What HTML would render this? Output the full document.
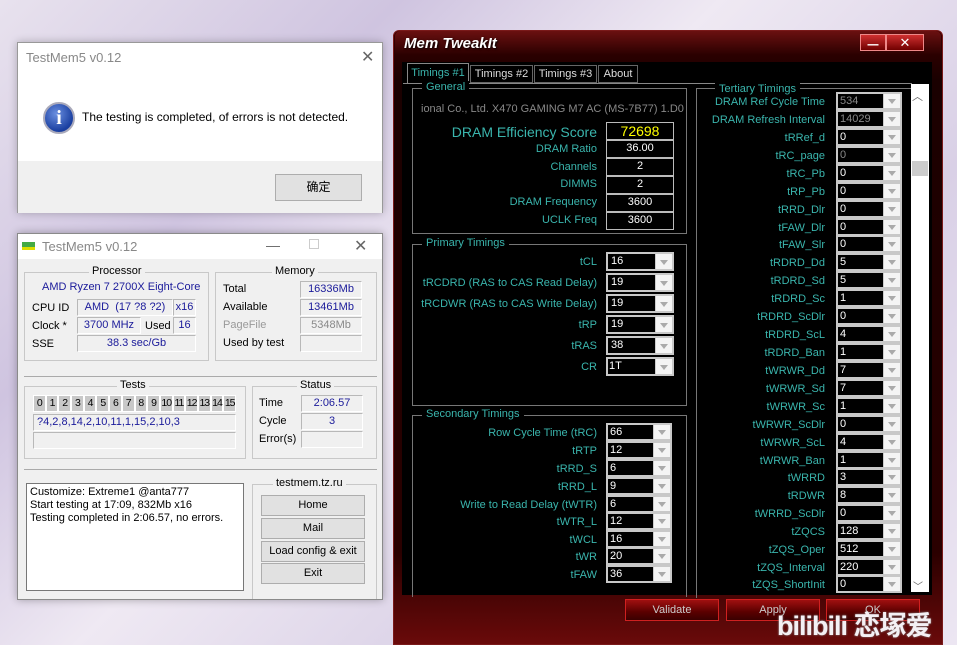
<!DOCTYPE html>
<html><head><meta charset="utf-8"><style>
*{margin:0;padding:0;box-sizing:border-box}
body{width:957px;height:645px;overflow:hidden;position:relative;font-family:"Liberation Sans","Noto Sans CJK SC",sans-serif;font-size:11px;
background:linear-gradient(135deg,#e8e2ee 0%,#cfc4e0 25%,#efe9f3 45%,#d9d0e6 70%,#ece6f2 100%)}
.a{position:absolute}
.w{background:#f0f0f0;border:1px solid #8a8a8a;box-shadow:0 0 8px rgba(0,0,0,.3)}
.g{border:1px solid #c8c8c8;position:absolute}
.gl{position:absolute;top:-8px;background:#f0f0f0;padding:0 3px;font-size:11px;color:#000}
.f{position:absolute;border:1px solid #b8b8b8;border-right-color:#fff;border-bottom-color:#fff;background:#f0f0f0;color:#1a1a9a;text-align:center;font-size:11px;line-height:15px;height:17px;white-space:nowrap}
.l{position:absolute;font-size:11px;color:#000;white-space:nowrap}
.btn{position:absolute;width:104px;height:21px;background:#e1e1e1;border:1px solid #adadad;text-align:center;line-height:19px;font-size:11px}
.mt{background:#000}
.t{position:absolute;color:#3ab5ad;font-size:11px;text-align:right;white-space:nowrap}
.v{position:absolute;border:1px solid #bbb;color:#fff;text-align:center;font-size:11px;line-height:15px;height:18px;background:#000}
.c{position:absolute;width:68px;height:19px;background:#000;border:2px solid #c8c8c8;color:#fff;font-size:11px;line-height:15px;padding-left:3px}
.c::after{content:"";position:absolute;right:0;top:0;width:16px;height:100%;background:#f4f4f4;border-left:1px solid #ccc}
.c::before{content:"";position:absolute;right:4px;top:6px;border:4px solid transparent;border-top:5px solid #aaa;z-index:2}
.c2{position:absolute;width:66px;height:18px;background:#000;border:2px solid #c8c8c8;color:#fff;font-size:11px;line-height:14px;padding-left:2px}
.c2::after{content:"";position:absolute;right:0;top:0;width:16px;height:100%;background:#f4f4f4;border-left:1px solid #ccc}
.c2::before{content:"";position:absolute;right:4px;top:5px;border:4px solid transparent;border-top:5px solid #aaa;z-index:2}
.gr{color:#888}
.mg{position:absolute;border:1px solid #777}
.mgl{position:absolute;top:-8px;background:#000;padding:0 4px;color:#3ab5ad;font-size:11px}
.rb{position:absolute;top:599px;width:94px;height:22px;border:1px solid #d02020;background:linear-gradient(#a01010,#5a0000 60%,#3a0000);color:#ccc;text-align:center;line-height:20px;font-size:11px}
.tab{position:absolute;top:65px;height:18px;border:1px solid #666;color:#ddd;text-align:center;line-height:16px;font-size:11px}
.tb span{background:#c8c8c8;border:1px solid #fff;width:12.7px;text-align:center;letter-spacing:-1px;font-size:10.5px}
</style></head><body>

<!-- dialog -->
<div class="a" style="left:17px;top:42px;width:366px;height:171px;background:#fff;border:1px solid #999;box-shadow:0 0 8px rgba(0,0,0,.25)">
 <div class="a" style="left:8px;top:7px;font-size:13px;color:#888">TestMem5 v0.12</div>
 <div class="a" style="left:343px;top:4px;font-size:16px;color:#666">✕</div>
 <div class="a" style="left:25px;top:59px;width:32px;height:32px;border-radius:50%;background:radial-gradient(circle at 40% 35%,#6a8fe0,#1a3fa0 70%);border:2px solid #aab;color:#fff;text-align:center;font:bold 20px/28px 'Liberation Serif',serif">i</div>
 <div class="a" style="left:64px;top:67px;font-size:12px;color:#000">The testing is completed, of errors is not detected.</div>
 <div class="a" style="left:0;top:118px;width:364px;height:52px;background:#f0f0f0"></div>
 <div class="a" style="left:257px;top:131px;width:87px;height:27px;background:#e1e1e1;border:1px solid #adadad;text-align:center;line-height:25px;font-size:12px">确定</div>
</div>

<!-- main testmem -->
<div class="a w" style="left:17px;top:233px;width:366px;height:367px">
 <div class="a" style="left:0;top:0;width:364px;height:25px;background:#fff"></div>
 <div class="a" style="left:4px;top:8px;width:13px;height:8px;background:#4a4;border-bottom:3px solid #dd0"></div>
 <div class="a" style="left:24px;top:5px;font-size:13px;color:#888">TestMem5 v0.12</div>
 <div class="a" style="left:248px;top:3px;color:#666;font-size:14px">—</div>
 <div class="a" style="left:291px;top:5px;width:10px;height:10px;border:1px solid #ccc"></div>
 <div class="a" style="left:336px;top:2px;color:#666;font-size:16px">✕</div>

 <div class="g" style="left:6px;top:38px;width:185px;height:89px"><div class="gl" style="left:64px">Processor</div>
  <div class="a" style="left:17px;top:8px;color:#1a1a9a;white-space:nowrap">AMD Ryzen 7 2700X Eight-Core</div>
  <div class="l" style="left:7px;top:29px">CPU ID</div><div class="f" style="left:52px;top:26px;width:96px">AMD &nbsp;(17 ?8 ?2)</div><div class="f" style="left:148px;top:26px;width:23px">x16</div>
  <div class="l" style="left:7px;top:47px">Clock *</div><div class="f" style="left:52px;top:44px;width:64px">3700 MHz</div><div class="l" style="left:120px;top:47px">Used</div><div class="f" style="left:148px;top:44px;width:23px">16</div>
  <div class="l" style="left:7px;top:65px">SSE</div><div class="f" style="left:52px;top:62px;width:119px">38.3 sec/Gb</div>
 </div>
 <div class="g" style="left:197px;top:38px;width:162px;height:89px"><div class="gl" style="left:56px">Memory</div>
  <div class="l" style="left:7px;top:10px">Total</div><div class="f" style="left:84px;top:8px;width:62px">16336Mb</div>
  <div class="l" style="left:7px;top:28px">Available</div><div class="f" style="left:84px;top:26px;width:62px">13461Mb</div>
  <div class="l" style="left:7px;top:46px;color:#999">PageFile</div><div class="f" style="left:84px;top:44px;width:62px;color:#888">5348Mb</div>
  <div class="l" style="left:7px;top:64px">Used by test</div><div class="f" style="left:84px;top:62px;width:62px"></div>
 </div>
 <div class="a" style="left:6px;top:142px;width:353px;border-top:1px solid #aaa"></div>
 <div class="g" style="left:6px;top:152px;width:222px;height:73px"><div class="gl" style="left:92px">Tests</div>
  <div class="a tb" style="left:8px;top:8px;width:203px;height:17px;display:flex;line-height:15px">
   <span>0</span><span>1</span><span>2</span><span>3</span><span>4</span><span>5</span><span>6</span><span>7</span><span>8</span><span>9</span><span>10</span><span>11</span><span>12</span><span>13</span><span>14</span><span>15</span>
  </div>
  <div class="f" style="left:8px;top:27px;width:203px;text-align:left;padding-left:3px;color:#1a1a9a">?4,2,8,14,2,10,11,1,15,2,10,3</div>
  <div class="f" style="left:8px;top:45px;width:203px"></div>
 </div>
 <div class="g" style="left:234px;top:152px;width:125px;height:73px"><div class="gl" style="left:44px">Status</div>
  <div class="l" style="left:6px;top:10px">Time</div><div class="f" style="left:48px;top:8px;width:62px">2:06.57</div>
  <div class="l" style="left:6px;top:28px">Cycle</div><div class="f" style="left:48px;top:26px;width:62px">3</div>
  <div class="l" style="left:6px;top:46px">Error(s)</div><div class="f" style="left:48px;top:44px;width:62px"></div>
 </div>
 <div class="a" style="left:6px;top:235px;width:353px;border-top:1px solid #aaa"></div>
 <div class="a" style="left:8px;top:249px;width:218px;height:108px;background:#fff;border:1px solid #777;padding:2px 3px;font-size:11px;line-height:13px;color:#000;white-space:nowrap">Customize: Extreme1 @anta777<br>Start testing at 17:09, 832Mb x16<br>Testing completed in 2:06.57, no errors.</div>
 <div class="g" style="left:234px;top:250px;width:125px;height:115px;border-bottom:none"><div class="gl" style="left:20px">testmem.tz.ru</div></div>
 <div class="btn" style="left:243px;top:261px">Home</div>
 <div class="btn" style="left:243px;top:284px">Mail</div>
 <div class="btn" style="left:243px;top:307px">Load config &amp; exit</div>
 <div class="btn" style="left:243px;top:329px">Exit</div>
</div>

<!-- Mem TweakIt -->
<div class="a" style="left:393px;top:30px;width:550px;height:615px;background:linear-gradient(#3a0000,#1a0000 8%,#2a0000 85%,#6a0a0a);border:1px solid #7a1a1a;border-radius:6px 6px 0 0"></div>
<div class="a" style="left:395px;top:31px;width:546px;height:24px;background:linear-gradient(#6a1010,#2a0000);border-radius:5px 5px 0 0"></div>
<div class="a" style="left:404px;top:35px;color:#fff;font:italic bold 15px 'Liberation Sans',sans-serif;text-shadow:1px 1px 2px #000">Mem TweakIt</div>
<div class="a" style="left:860px;top:34px;width:26px;height:17px;background:linear-gradient(#d03030,#700000);border:1px solid #e88;color:#fff;text-align:center;font-size:11px;line-height:12px">▁</div>
<div class="a" style="left:886px;top:34px;width:38px;height:17px;background:linear-gradient(#d03030,#700000);border:1px solid #e88;color:#fff;text-align:center;font-size:13px;line-height:15px">✕</div>
<div class="a mt" style="left:402px;top:62px;width:530px;height:533px"></div>
<!-- tabs -->
<div class="a" style="left:407px;top:63px;width:62px;height:21px;border:1px solid #888;border-bottom:none;background:#000;color:#3ab5ad;text-align:center;line-height:19px;font-size:11px">Timings #1</div>
<div class="tab" style="left:470px;width:63px">Timings #2</div>
<div class="tab" style="left:534px;width:63px">Timings #3</div>
<div class="tab" style="left:598px;width:40px">About</div>
<div class="a" style="left:403px;top:83px;width:509px;border-top:1px solid #888"></div>

<div class="mg" style="left:412px;top:88px;width:275px;height:146px"><div class="mgl" style="left:9px">General</div></div>
<div class="a" style="left:421px;top:103px;color:#888;font-size:11px;white-space:nowrap;width:264px;overflow:hidden">ional Co., Ltd. X470 GAMING M7 AC (MS-7B77) 1.D0</div>
<div class="t" style="left:300px;top:124px;width:297px;font-size:14px">DRAM Efficiency Score</div>
<div class="v" style="left:606px;top:122px;width:68px;color:#ff0;font-size:14px;line-height:16px">72698</div>
<div class="t" style="left:300px;top:143px;width:297px">DRAM Ratio</div><div class="v" style="left:606px;top:140px;width:68px">36.00</div>
<div class="t" style="left:300px;top:161px;width:297px">Channels</div><div class="v" style="left:606px;top:158px;width:68px">2</div>
<div class="t" style="left:300px;top:178px;width:297px">DIMMS</div><div class="v" style="left:606px;top:176px;width:68px">2</div>
<div class="t" style="left:300px;top:196px;width:297px">DRAM Frequency</div><div class="v" style="left:606px;top:194px;width:68px">3600</div>
<div class="t" style="left:300px;top:214px;width:297px">UCLK Freq</div><div class="v" style="left:606px;top:212px;width:68px">3600</div>

<div class="mg" style="left:412px;top:244px;width:275px;height:162px"><div class="mgl" style="left:9px">Primary Timings</div></div>
<div class="t" style="left:300px;top:256px;width:297px">tCL</div><div class="c" style="left:606px;top:252px">16</div>
<div class="t" style="left:300px;top:277px;width:297px">tRCDRD (RAS to CAS Read Delay)</div><div class="c" style="left:606px;top:273px">19</div>
<div class="t" style="left:300px;top:298px;width:297px">tRCDWR (RAS to CAS Write Delay)</div><div class="c" style="left:606px;top:294px">19</div>
<div class="t" style="left:300px;top:319px;width:297px">tRP</div><div class="c" style="left:606px;top:315px">19</div>
<div class="t" style="left:300px;top:340px;width:297px">tRAS</div><div class="c" style="left:606px;top:336px">38</div>
<div class="t" style="left:300px;top:361px;width:297px">CR</div><div class="c" style="left:606px;top:357px;padding-left:1px">1T</div>

<div class="mg" style="left:412px;top:415px;width:275px;height:182px;border-bottom:none"><div class="mgl" style="left:9px">Secondary Timings</div></div>
<div class="t" style="left:300px;top:427px;width:297px">Row Cycle Time (tRC)</div><div class="c2" style="left:606px;top:423px">66</div>
<div class="t" style="left:300px;top:445px;width:297px">tRTP</div><div class="c2" style="left:606px;top:441px">12</div>
<div class="t" style="left:300px;top:463px;width:297px">tRRD_S</div><div class="c2" style="left:606px;top:459px">6</div>
<div class="t" style="left:300px;top:481px;width:297px">tRRD_L</div><div class="c2" style="left:606px;top:477px">9</div>
<div class="t" style="left:300px;top:499px;width:297px">Write to Read Delay (tWTR)</div><div class="c2" style="left:606px;top:495px">6</div>
<div class="t" style="left:300px;top:516px;width:297px">tWTR_L</div><div class="c2" style="left:606px;top:512px">12</div>
<div class="t" style="left:300px;top:534px;width:297px">tWCL</div><div class="c2" style="left:606px;top:530px">16</div>
<div class="t" style="left:300px;top:551px;width:297px">tWR</div><div class="c2" style="left:606px;top:547px">20</div>
<div class="t" style="left:300px;top:569px;width:297px">tFAW</div><div class="c2" style="left:606px;top:565px">36</div>

<div class="mg" style="left:696px;top:88px;width:216px;height:510px;border-bottom:none;border-right:none"><div class="mgl" style="left:18px;top:-6px">Tertiary Timings</div></div>
<div class="a" style="left:911px;top:84px;width:18px;height:508px;background:#fff"></div>
<div class="a" style="left:912px;top:88px;color:#666;font-size:11px">︿</div>
<div class="a" style="left:912px;top:161px;width:16px;height:15px;background:#ccc"></div>
<div class="a" style="left:913px;top:578px;color:#666;font-size:10px">﹀</div>
<div class="t" style="left:600px;top:96px;width:225px">DRAM Ref Cycle Time</div><div class="c2 gr" style="left:836px;top:92px">534</div>
<div class="t" style="left:600px;top:114px;width:225px">DRAM Refresh Interval</div><div class="c2 gr" style="left:836px;top:110px">14029</div>
<div class="t" style="left:600px;top:132px;width:225px">tRRef_d</div><div class="c2" style="left:836px;top:128px">0</div>
<div class="t" style="left:600px;top:150px;width:225px">tRC_page</div><div class="c2 gr" style="left:836px;top:146px">0</div>
<div class="t" style="left:600px;top:168px;width:225px">tRC_Pb</div><div class="c2" style="left:836px;top:164px">0</div>
<div class="t" style="left:600px;top:186px;width:225px">tRP_Pb</div><div class="c2" style="left:836px;top:182px">0</div>
<div class="t" style="left:600px;top:204px;width:225px">tRRD_Dlr</div><div class="c2" style="left:836px;top:200px">0</div>
<div class="t" style="left:600px;top:222px;width:225px">tFAW_Dlr</div><div class="c2" style="left:836px;top:218px">0</div>
<div class="t" style="left:600px;top:239px;width:225px">tFAW_Slr</div><div class="c2" style="left:836px;top:235px">0</div>
<div class="t" style="left:600px;top:257px;width:225px">tRDRD_Dd</div><div class="c2" style="left:836px;top:253px">5</div>
<div class="t" style="left:600px;top:275px;width:225px">tRDRD_Sd</div><div class="c2" style="left:836px;top:271px">5</div>
<div class="t" style="left:600px;top:293px;width:225px">tRDRD_Sc</div><div class="c2" style="left:836px;top:289px">1</div>
<div class="t" style="left:600px;top:311px;width:225px">tRDRD_ScDlr</div><div class="c2" style="left:836px;top:307px">0</div>
<div class="t" style="left:600px;top:329px;width:225px">tRDRD_ScL</div><div class="c2" style="left:836px;top:325px">4</div>
<div class="t" style="left:600px;top:347px;width:225px">tRDRD_Ban</div><div class="c2" style="left:836px;top:343px">1</div>
<div class="t" style="left:600px;top:365px;width:225px">tWRWR_Dd</div><div class="c2" style="left:836px;top:361px">7</div>
<div class="t" style="left:600px;top:383px;width:225px">tWRWR_Sd</div><div class="c2" style="left:836px;top:379px">7</div>
<div class="t" style="left:600px;top:401px;width:225px">tWRWR_Sc</div><div class="c2" style="left:836px;top:397px">1</div>
<div class="t" style="left:600px;top:419px;width:225px">tWRWR_ScDlr</div><div class="c2" style="left:836px;top:415px">0</div>
<div class="t" style="left:600px;top:437px;width:225px">tWRWR_ScL</div><div class="c2" style="left:836px;top:433px">4</div>
<div class="t" style="left:600px;top:455px;width:225px">tWRWR_Ban</div><div class="c2" style="left:836px;top:451px">1</div>
<div class="t" style="left:600px;top:472px;width:225px">tWRRD</div><div class="c2" style="left:836px;top:468px">3</div>
<div class="t" style="left:600px;top:490px;width:225px">tRDWR</div><div class="c2" style="left:836px;top:486px">8</div>
<div class="t" style="left:600px;top:508px;width:225px">tWRRD_ScDlr</div><div class="c2" style="left:836px;top:504px">0</div>
<div class="t" style="left:600px;top:526px;width:225px">tZQCS</div><div class="c2" style="left:836px;top:522px">128</div>
<div class="t" style="left:600px;top:544px;width:225px">tZQS_Oper</div><div class="c2" style="left:836px;top:540px">512</div>
<div class="t" style="left:600px;top:562px;width:225px">tZQS_Interval</div><div class="c2" style="left:836px;top:558px">220</div>
<div class="t" style="left:600px;top:579px;width:225px">tZQS_ShortInit</div><div class="c2" style="left:836px;top:575px">0</div>

<div class="rb" style="left:625px">Validate</div>
<div class="rb" style="left:726px">Apply</div>
<div class="rb" style="left:826px">OK</div>
<div class="a" style="left:777px;top:610px;color:#f4f0f4;font:bold 27px/32px 'Liberation Sans','Noto Sans CJK SC',sans-serif;letter-spacing:-1px;text-shadow:0 0 2px #888">bilibili 恋塚爱</div>
</body></html>
